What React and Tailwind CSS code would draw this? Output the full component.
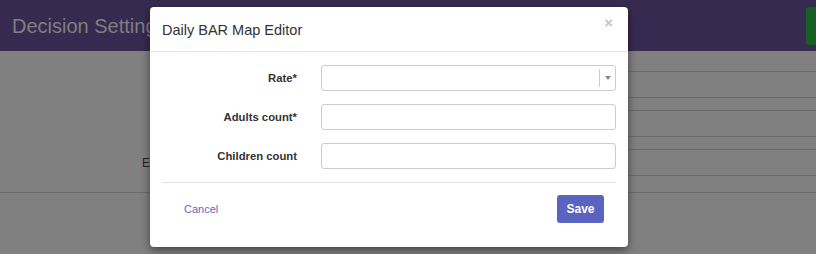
import React from "react";

function Field({ label, select }) {
  return (
    <div className="flex items-center">
      <label className="w-[147px] pt-[1px] text-right text-[11.3px] font-bold text-[#333]">{label}</label>
      <div className="ml-[24px] flex h-[26px] w-[295px] items-center rounded-[3px] border border-[#ccc] bg-white">
        {select && (
          <>
            <div className="flex-1" />
            <div className="h-[18px] w-px bg-[#ccc]" />
            <div className="flex w-[15px] justify-center">
              <span className="block h-0 w-0 border-x-[3px] border-t-[4px] border-x-transparent border-t-[#888]" />
            </div>
          </>
        )}
      </div>
    </div>
  );
}

export default function App() {
  return (
    <div className="relative h-[254px] w-[816px] overflow-hidden bg-[#808080] font-['Liberation_Sans',Arial,sans-serif]">
      <header className="flex h-[51px] items-center justify-between bg-[#372a50] pl-[12px]">
        <h1 className="text-[20px] text-[#7f7f7f]">Decision Settings</h1>
        <div className="h-[38px] w-[10px] rounded-l-[3px] bg-[#155f22]" />
      </header>
      <div className="relative">
        <div className="ml-[150px] flex flex-col">
          <div className="mt-[20px] h-px bg-[#6b6b6b]" />
          <div className="mt-[25px] h-px bg-[#6b6b6b]" />
          <div className="mt-[12px] h-px bg-[#6b6b6b]" />
          <div className="mt-[25px] h-px bg-[#6b6b6b]" />
          <div className="mt-[12px] h-px bg-[#6b6b6b]" />
          <div className="mt-[25px] h-px bg-[#6b6b6b]" />
        </div>
        <div className="absolute left-[142px] top-[106px] text-[12px] leading-none text-[#222]">E</div>
        <div className="mt-[16px] h-px bg-[#6b6b6b]" />
      </div>

      <div className="absolute left-[150px] top-[7px] w-[478px] rounded-[4px] bg-white shadow-[0_3px_9px_rgba(0,0,0,0.5)]">
        <div className="flex h-[45px] items-center justify-between border-b border-[#e5e5e5] px-[12px]">
          <h2 className="pt-[3px] text-[14.5px] text-[#333]">Daily BAR Map Editor</h2>
          <span className="-mt-[13px] mr-[3px] text-[15px] font-bold leading-none text-[#c4c4c4]">×</span>
        </div>
        <div className="flex flex-col gap-[13px] py-[13px]">
          <Field label="Rate*" select />
          <Field label="Adults count*" />
          <Field label="Children count" />
        </div>
        <div className="mx-[12px] border-t border-[#e5e5e5]" />
        <div className="flex items-center justify-between pb-[24px] pl-[34px] pr-[24px] pt-[12px]">
          <a className="text-[11px] text-[#5c67c4]">Cancel</a>
          <button className="h-[28px] w-[47px] rounded-[3px] bg-[#5a63c0] text-[12px] font-bold text-white">Save</button>
        </div>
      </div>
    </div>
  );
}
